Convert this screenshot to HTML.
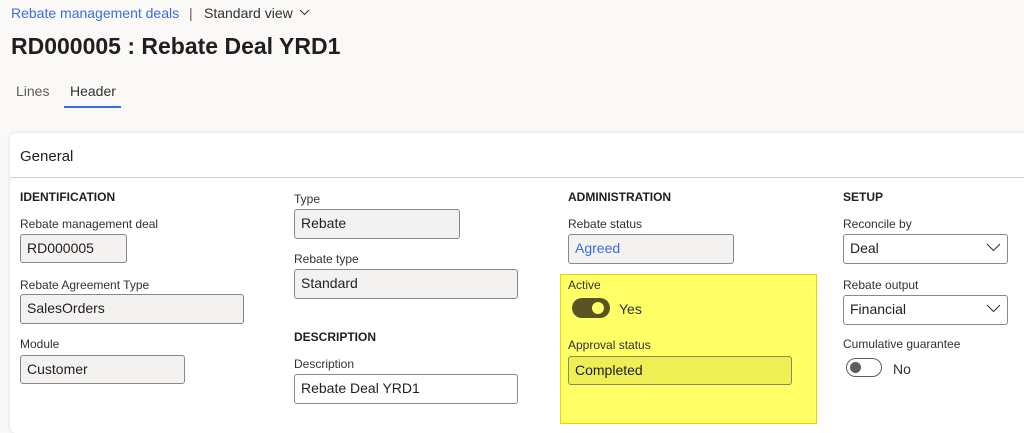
<html><head><style>
body{margin:0;width:1024px;height:418px;background:#faf9f8;font-family:"Liberation Sans",sans-serif;position:relative;overflow:hidden;color:#323130}
.a{position:absolute;white-space:nowrap}
.l{font-size:12px;color:#323130}
.h{font-size:12px;font-weight:bold;color:#201f1e}
.i{position:absolute;box-sizing:border-box;border:1px solid #8a8886;border-radius:3px;background:#f3f2f1;font-size:14px;padding-left:6px;line-height:26px;color:#201f1e}
.w{background:#fff}
.chev{position:absolute;right:6px;top:8px}
</style></head><body>
<div class="a" style="left:11px;top:5px;font-size:14px;color:#3b6de0">Rebate management deals</div>
<div class="a" style="left:189px;top:5px;font-size:14px;color:#605e5c">|</div>
<div class="a" style="left:204px;top:5px;font-size:14px;color:#323130">Standard view</div>
<svg class="a" style="left:299px;top:9px" width="11" height="7"><path d="M1 1l4.5 4.5L10 1" stroke="#323130" fill="none"/></svg>
<div class="a" style="left:11px;top:33px;font-size:23px;font-weight:bold;color:#201f1e">RD000005 : Rebate Deal YRD1</div>
<div class="a" style="left:16px;top:83px;font-size:14px;color:#605e5c">Lines</div>
<div class="a" style="left:70px;top:83px;font-size:14px;color:#323130">Header</div>
<div class="a" style="left:64px;top:106px;width:57px;height:2px;background:#2f6fe0"></div>
<div class="a" style="left:10px;top:133px;width:1030px;height:300px;background:#fff;border-radius:6px;box-shadow:0 0 3px rgba(0,0,0,.15)"></div>
<div class="a" style="left:10px;top:177px;width:1014px;height:1px;background:#d2d0ce"></div>
<div class="a" style="left:20px;top:148px;font-size:15px;color:#201f1e">General</div>
<div class="a" style="left:560px;top:274px;width:257px;height:150px;background:#ffff66;border:1px solid #f0d000;box-sizing:border-box"></div>

<div class="a h" style="left:20px;top:190px">IDENTIFICATION</div>
<div class="a l" style="left:20px;top:217px">Rebate management deal</div>
<div class="i" style="left:20px;top:234px;width:107px;height:29px">RD000005</div>
<div class="a l" style="left:20px;top:278px">Rebate Agreement Type</div>
<div class="i" style="left:20px;top:294px;width:224px;height:30px">SalesOrders</div>
<div class="a l" style="left:20px;top:337px">Module</div>
<div class="i" style="left:20px;top:355px;width:165px;height:29px">Customer</div>

<div class="a l" style="left:294px;top:192px">Type</div>
<div class="i" style="left:294px;top:209px;width:166px;height:30px">Rebate</div>
<div class="a l" style="left:294px;top:252px">Rebate type</div>
<div class="i" style="left:294px;top:269px;width:224px;height:30px">Standard</div>
<div class="a h" style="left:294px;top:330px">DESCRIPTION</div>
<div class="a l" style="left:294px;top:357px">Description</div>
<div class="i w" style="left:294px;top:374px;width:224px;height:30px">Rebate Deal YRD1</div>

<div class="a h" style="left:568px;top:190px">ADMINISTRATION</div>
<div class="a l" style="left:568px;top:217px">Rebate status</div>
<div class="i" style="left:568px;top:234px;width:166px;height:30px;color:#3b6de0">Agreed</div>
<div class="a l" style="left:568px;top:278px">Active</div>
<div class="a" style="left:572px;top:298px;width:38px;height:20px;border-radius:10px;background:#5a5424"></div>
<div class="a" style="left:592px;top:302px;width:12px;height:12px;border-radius:6px;background:#ffff66"></div>
<div class="a" style="left:619px;top:301px;font-size:14px;color:#323130">Yes</div>
<div class="a l" style="left:568px;top:338px">Approval status</div>
<div class="i" style="left:568px;top:356px;width:224px;height:29px;background:#eeee55;border-color:#8a8a60">Completed</div>

<div class="a h" style="left:843px;top:190px">SETUP</div>
<div class="a l" style="left:843px;top:217px">Reconcile by</div>
<div class="i w" style="left:843px;top:234px;width:165px;height:30px">Deal<svg class="chev" width="15" height="9"><path d="M1 1l6.5 6.5L14 1" stroke="#323130" fill="none"/></svg></div>
<div class="a l" style="left:843px;top:278px">Rebate output</div>
<div class="i w" style="left:843px;top:295px;width:165px;height:30px">Financial<svg class="chev" width="15" height="9"><path d="M1 1l6.5 6.5L14 1" stroke="#323130" fill="none"/></svg></div>
<div class="a l" style="left:843px;top:337px">Cumulative guarantee</div>
<div class="a" style="left:846px;top:358px;width:36px;height:19px;border-radius:10px;border:1px solid #605e5c;box-sizing:border-box;background:#fff"></div>
<div class="a" style="left:850px;top:362px;width:11px;height:11px;border-radius:6px;background:#605e5c"></div>
<div class="a" style="left:893px;top:361px;font-size:14px">No</div>
</body></html>
